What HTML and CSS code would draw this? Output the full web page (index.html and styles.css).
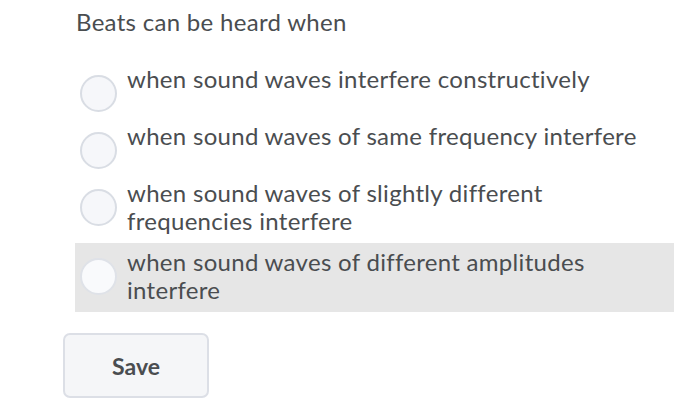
FILE: index.html
```html
<!DOCTYPE html>
<html lang="en">

<head>
    <meta charset="UTF-8">
    <meta name="viewport" content="width=device-width, initial-scale=1.0">
    <title>Question</title>
    <link rel="stylesheet" href="styles.css">
</head>

<body>
    <div class="question">
        <div class="question-text">Beats can be heard when</div>
        <div class="options">
            <label class="option">
                <input type="radio" name="q1" class="radio">
                <span class="option-text">when sound waves interfere constructively</span>
            </label>
            <label class="option">
                <input type="radio" name="q1" class="radio">
                <span class="option-text">when sound waves of same frequency interfere</span>
            </label>
            <label class="option">
                <input type="radio" name="q1" class="radio">
                <span class="option-text">when sound waves of slightly different<br>frequencies interfere</span>
            </label>
            <label class="option option-hover">
                <input type="radio" name="q1" class="radio">
                <span class="option-text">when sound waves of different amplitudes<br>interfere</span>
            </label>
        </div>
        <button class="save-button">Save</button>
    </div>
</body>

</html>
```

FILE: styles.css
```css
body {
    margin: 0;
    background-color: #ffffff;
    font-family: Lato, "Open Sans", sans-serif;
    color: #4a4d50;
}

.question {
    padding: 8px 0 0 63px;
}

.question-text {
    font-size: 24px;
    line-height: 28px;
    letter-spacing: 0.3px;
    margin-left: 13px;
}

.options {
    margin: 24px 0 0 12px;
    width: 599px;
}

.option {
    display: flex;
    align-items: flex-start;
    padding: 5px 0 8px 5px;
    cursor: pointer;
}

.option-hover {
    background-color: #e6e6e6;
}

.radio {
    appearance: none;
    -webkit-appearance: none;
    flex: none;
    width: 37px;
    height: 37px;
    margin: 10px 10px -3px 0;
    border: 2px solid #d9dde4;
    border-radius: 50%;
    background-color: #f6f7fa;
    box-sizing: border-box;
    outline: none;
}

.option-hover .radio {
    background-color: #f9fafc;
    border-color: #dfe2e8;
}

.option-text {
    font-size: 24px;
    line-height: 28px;
    letter-spacing: 0.3px;
}

.save-button {
    margin-top: 21px;
    width: 146px;
    height: 65px;
    font-family: Lato, "Open Sans", sans-serif;
    font-size: 23px;
    font-weight: bold;
    color: #4a4d50;
    background-color: #f5f6f8;
    border: 2px solid #dcdfe6;
    border-radius: 7px;
    cursor: pointer;
}
```
